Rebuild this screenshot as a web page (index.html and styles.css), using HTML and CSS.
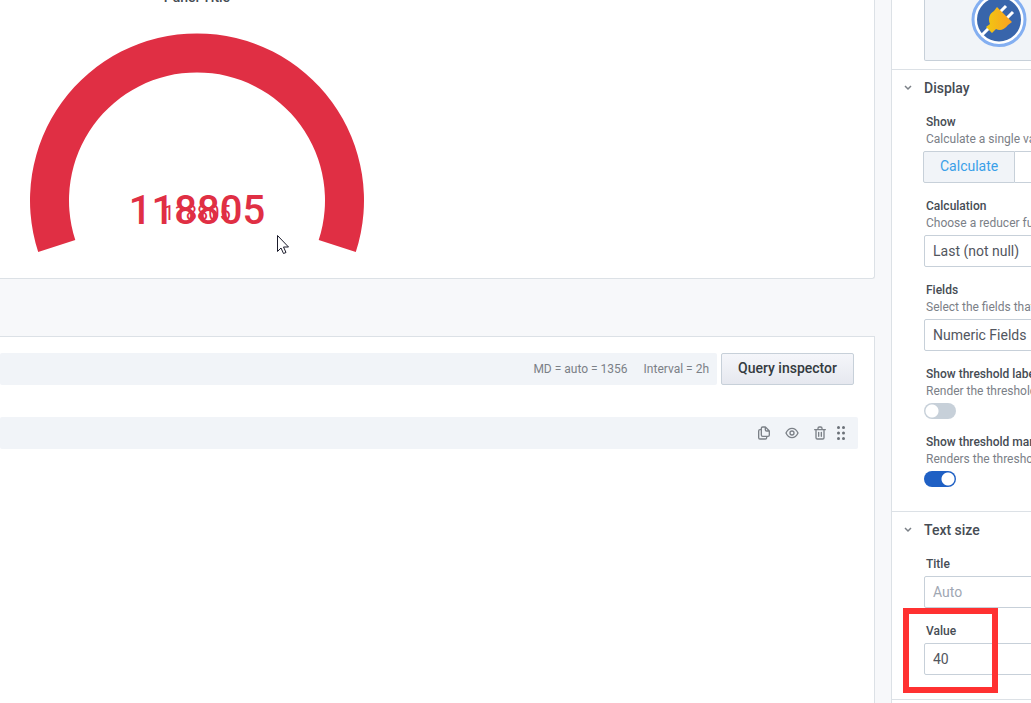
FILE: index.html
```html
<!DOCTYPE html>
<html lang="en">
<head>
    <meta charset="UTF-8">
    <meta name="viewport" content="width=device-width, initial-scale=1.0">
    <title>Edit Panel</title>
    <link rel="stylesheet" href="styles.css">
</head>
<body>

<main class="editor">
    <section class="panel">
        <div class="gauge">
            <h1 class="panel-title">Panel Title</h1>
            <svg class="gauge-chart" viewBox="0 0 394 230" role="img" aria-label="118805">
                <path fill="#e02f44" d="M38.2 219.1A167 167 0 1 1 355.8 219.1L318.7 207.1A128 128 0 1 0 75.3 207.1Z"/>
                <text class="gauge-value" x="197" y="191">118805</text>
                <text class="gauge-label" x="197" y="187">118805</text>
            </svg>
        </div>
        <svg class="cursor" viewBox="0 0 14 21">
            <path fill="#fff" stroke="#1b1b2b" d="M1.500 1.500V17.500L5 14L7.500 19.500L10 18.500L7.500 13H12.500Z"/>
        </svg>
    </section>

    <section class="queries">
        <div class="query-options">
            <div class="query-info">
                <span>MD = auto = 1356</span>
                <span>Interval = 2h</span>
            </div>
            <button class="inspector" type="button">Query inspector</button>
        </div>
        <div class="query-row">
            <button class="icon-btn" type="button" aria-label="Duplicate query">
                <svg viewBox="0 0 24 24"><path d="M21 8.940a1.300 1.300 0 0 0-.060-.270v-.090a1 1 0 0 0-.190-.280l-6-6a1 1 0 0 0-.280-.190.300.300 0 0 0-.100 0 1.100 1.100 0 0 0-.310-.110H10a3 3 0 0 0-3 3v1H6a3 3 0 0 0-3 3v10a3 3 0 0 0 3 3h8a3 3 0 0 0 3-3v-1h1a3 3 0 0 0 3-3V9v-.060ZM15 5.410 17.590 8H16a1 1 0 0 1-1-1V5.410ZM15 19a1 1 0 0 1-1 1H6a1 1 0 0 1-1-1V9a1 1 0 0 1 1-1h1v7a3 3 0 0 0 3 3h5v1Zm4-4a1 1 0 0 1-1 1h-8a1 1 0 0 1-1-1V5a1 1 0 0 1 1-1h3v3a3 3 0 0 0 3 3h3v5Z"/></svg>
            </button>
            <button class="icon-btn" type="button" aria-label="Toggle query">
                <svg viewBox="0 0 24 24"><path d="M21.920 11.600C19.900 6.910 16.100 4 12 4s-7.900 2.910-9.920 7.600a1 1 0 0 0 0 .800C4.100 17.090 7.900 20 12 20s7.900-2.910 9.920-7.600a1 1 0 0 0 0-.800ZM12 18c-3.170 0-6.170-2.290-7.900-6C5.830 8.290 8.830 6 12 6s6.170 2.290 7.900 6c-1.730 3.710-4.730 6-7.900 6Zm0-10a4 4 0 1 0 4 4 4 4 0 0 0-4-4Zm0 6a2 2 0 1 1 2-2 2 2 0 0 1-2 2Z"/></svg>
            </button>
            <button class="icon-btn" type="button" aria-label="Remove query">
                <svg viewBox="0 0 24 24"><path d="M10 18a1 1 0 0 0 1-1v-6a1 1 0 0 0-2 0v6a1 1 0 0 0 1 1ZM20 6h-4V5a3 3 0 0 0-3-3h-2a3 3 0 0 0-3 3v1H4a1 1 0 0 0 0 2h1v11a3 3 0 0 0 3 3h8a3 3 0 0 0 3-3V8h1a1 1 0 0 0 0-2ZM10 5a1 1 0 0 1 1-1h2a1 1 0 0 1 1 1v1h-4V5Zm7 14a1 1 0 0 1-1 1H8a1 1 0 0 1-1-1V8h10v11Zm-3-1a1 1 0 0 0 1-1v-6a1 1 0 0 0-2 0v6a1 1 0 0 0 1 1Z"/></svg>
            </button>
            <svg class="drag" viewBox="0 0 10 16">
                <circle cx="2.500" cy="2.500" r="1.500"/><circle cx="7.500" cy="2.500" r="1.500"/>
                <circle cx="2.500" cy="8" r="1.500"/><circle cx="7.500" cy="8" r="1.500"/>
                <circle cx="2.500" cy="13.500" r="1.500"/><circle cx="7.500" cy="13.500" r="1.500"/>
            </svg>
        </div>
    </section>
</main>

<aside class="sidebar">
    <div class="options">
        <div class="plugin">
            <svg class="plugin-logo" viewBox="0 0 56 56">
                <defs>
                    <linearGradient id="plug" x1="0" y1="0" x2="1" y2="0">
                        <stop offset="0" stop-color="#f2c811"/>
                        <stop offset="1" stop-color="#faa021"/>
                    </linearGradient>
                </defs>
                <circle cx="28" cy="27.500" r="26" fill="#fff" stroke="#84aff1" stroke-width="3"/>
                <circle cx="28" cy="27.500" r="22" fill="#3865ab"/>
                <path stroke="#fff" stroke-width="3" d="M18 36L11 43M29 20L35 14M36 26L42 20"/>
                <path fill="url(#plug)" d="M26 15L41 30L37 33C33 38 29 39 25 37L21 41L15 35L19 32C17 27 18 22 23 19Z"/>
            </svg>
        </div>

        <section class="group">
            <h2 class="group-title">
                <svg class="chevron" viewBox="0 0 8 6"><path d="M1 1L4 4L7 1"/></svg>
                Display
            </h2>
            <fieldset class="field">
                <legend class="label">Show</legend>
                <p class="hint">Calculate a single value per column or series or show each row</p>
                <div class="radio-group">
                    <input type="radio" name="show" id="show-calculate" checked>
                    <label for="show-calculate">Calculate</label>
                    <input type="radio" name="show" id="show-all">
                    <label for="show-all">All values</label>
                </div>
            </fieldset>
            <div class="field">
                <label class="label" for="calculation">Calculation</label>
                <p class="hint">Choose a reducer function / calculation</p>
                <select class="control" id="calculation"><option>Last (not null)</option></select>
            </div>
            <div class="field">
                <label class="label" for="fields">Fields</label>
                <p class="hint">Select the fields that should be included in the panel</p>
                <select class="control" id="fields"><option>Numeric Fields</option></select>
            </div>
            <div class="field">
                <label class="label" for="threshold-labels">Show threshold labels</label>
                <p class="hint">Render the threshold values around the gauge bar</p>
                <input class="switch" type="checkbox" id="threshold-labels">
            </div>
            <div class="field">
                <label class="label" for="threshold-markers">Show threshold markers</label>
                <p class="hint">Renders the thresholds as an outer bar</p>
                <input class="switch" type="checkbox" id="threshold-markers" checked>
            </div>
        </section>

        <section class="group">
            <h2 class="group-title">
                <svg class="chevron" viewBox="0 0 8 6"><path d="M1 1L4 4L7 1"/></svg>
                Text size
            </h2>
            <div class="field">
                <label class="label" for="title-size">Title</label>
                <input class="control" type="text" id="title-size" placeholder="Auto">
            </div>
            <div class="field marked">
                <label class="label" for="value-size">Value</label>
                <input class="control" type="text" id="value-size" value="40">
            </div>
        </section>
        <section class="group"></section>
    </div>
</aside>

</body>
</html>
```
FILE: styles.css
```css
* {
    box-sizing: border-box;
}

body {
    margin: 0;
    display: flex;
    gap: 16px;
    height: 100vh;
    overflow: hidden;
    background: #f7f8fa;
    color: #464c54;
    font-family: Roboto, sans-serif;
    font-size: 14px;
}

button, input, select {
    margin: 0;
    font: inherit;
    color: inherit;
}

/* Left side: preview and queries */
.editor {
    flex: 1;
    min-width: 0;
    display: flex;
    flex-direction: column;
    gap: 57px;
}

.panel {
    position: relative;
    padding-bottom: 15px;
    background: #fff;
    border: 1px solid #dce1e6;
    border-width: 0 1px 1px 0;
    border-radius: 0 0 3px 0;
}

.gauge {
    width: 394px;
    max-width: 100%;
}

.panel-title {
    margin: -14px 0 0;
    font-size: 14px;
    font-weight: 500;
    line-height: 22px;
    text-align: center;
}

.gauge-chart {
    display: block;
    width: 100%;
    margin-top: 25px;
}

.gauge-value, .gauge-label {
    fill: #e02f44;
    text-anchor: middle;
}

.gauge-value {
    font-size: 40px;
    font-weight: 500;
}

.gauge-label {
    font-size: 20px;
}

.cursor {
    position: absolute;
    left: 276px;
    top: 234px;
    width: 14px;
    height: 21px;
}

.queries {
    flex: 1;
    padding: 16px;
    background: #fff;
    border: 1px solid #dce1e6;
    border-width: 1px 1px 0 0;
}

.query-options {
    display: flex;
    gap: 4px;
    margin-right: 4px;
}

.query-info {
    flex: 1;
    display: flex;
    justify-content: flex-end;
    align-items: center;
    gap: 16px;
    margin-left: -16px;
    padding-right: 8px;
    background: #f1f4f8;
    border-radius: 2px;
    color: #7b8087;
    font-size: 12px;
}

.inspector {
    height: 32px;
    padding: 0 16px 2px;
    border: 1px solid #c7d0d9;
    border-radius: 2px;
    background: linear-gradient(#f5f6fa, #e6e8ef);
    color: #343b40;
    font-weight: 500;
}

.query-row {
    display: flex;
    justify-content: flex-end;
    align-items: center;
    gap: 12px;
    height: 32px;
    margin: 32px 0 0 -16px;
    padding-right: 12px;
    background: #f1f4f8;
    border-radius: 2px;
}

.icon-btn {
    display: flex;
    padding: 0;
    border: 0;
    background: none;
}

.icon-btn svg {
    width: 16px;
    height: 16px;
    fill: #7b8087;
}

.drag {
    width: 10px;
    height: 16px;
    margin-left: -4px;
    fill: #6b7178;
}

/* Right side: panel options */
.sidebar {
    flex: 0 0 140px;
    overflow: hidden;
    background: #fff;
    border-left: 1px solid #dce1e6;
}

.options {
    width: 340px;
}

.plugin {
    display: flex;
    height: 61px;
    margin: 0 16px 8px 32px;
    padding-left: 46px;
    border: 1px solid #c7d0d9;
    border-top: 0;
    border-radius: 0 0 2px 2px;
    background: #f1f4f8;
}

.plugin-logo {
    width: 56px;
    height: 56px;
    margin-top: -8px;
}

.group {
    padding: 0 16px 10px 32px;
    border-top: 1px solid #dce1e6;
}

.group-title {
    display: flex;
    align-items: center;
    gap: 12px;
    height: 35px;
    margin: 0 0 9px -20px;
    font-size: 14px;
    font-weight: 500;
}

.chevron {
    width: 8px;
    height: 6px;
    fill: none;
    stroke: #7b8087;
    stroke-width: 1.5;
}

.field {
    margin: 0 0 15px;
    padding: 0;
    border: 0;
}

.field:last-child {
    margin-bottom: 14px;
}

.label {
    display: block;
    padding: 0 0 0 2px;
    font-size: 12px;
    font-weight: 500;
    line-height: 17px;
}

.hint {
    margin: 0;
    padding-left: 2px;
    color: #7b8087;
    font-size: 12px;
    line-height: 17px;
    white-space: nowrap;
}

.control {
    display: block;
    width: 100%;
    height: 32px;
    margin-top: 3px;
    padding: 0 8px;
    border: 1px solid #c7d0d9;
    border-radius: 2px;
    background: #fff;
    color: #52565e;
    appearance: none;
}

.control::placeholder {
    color: #9fa7b3;
}

.radio-group {
    display: flex;
    margin: 3px 0 0 -1px;
}

.radio-group input {
    position: absolute;
    opacity: 0;
}

.radio-group label {
    height: 32px;
    padding: 0 16px;
    border: 1px solid #c7d0d9;
    line-height: 29px;
}

.radio-group label + input + label {
    border-left: 0;
}

.radio-group input:checked + label {
    border-radius: 2px 0 0 2px;
    background: #f1f4f8;
    color: #3aa0e8;
}

.switch {
    display: block;
    width: 32px;
    height: 16px;
    margin-top: 3px;
    border-radius: 8px;
    background: radial-gradient(circle at 8px 8px, #fff 6px, #c7d0d9 7px);
    appearance: none;
}

.switch:checked {
    background: radial-gradient(circle at 24px 8px, #fff 6px, #1f60c4 7px);
}

/* Red frame around the value field */
.marked {
    position: relative;
}

.marked::after {
    content: "";
    position: absolute;
    top: -15px;
    left: -21px;
    box-sizing: border-box;
    width: 95px;
    height: 85px;
    border: 6px solid #ff3131;
    pointer-events: none;
}
```
